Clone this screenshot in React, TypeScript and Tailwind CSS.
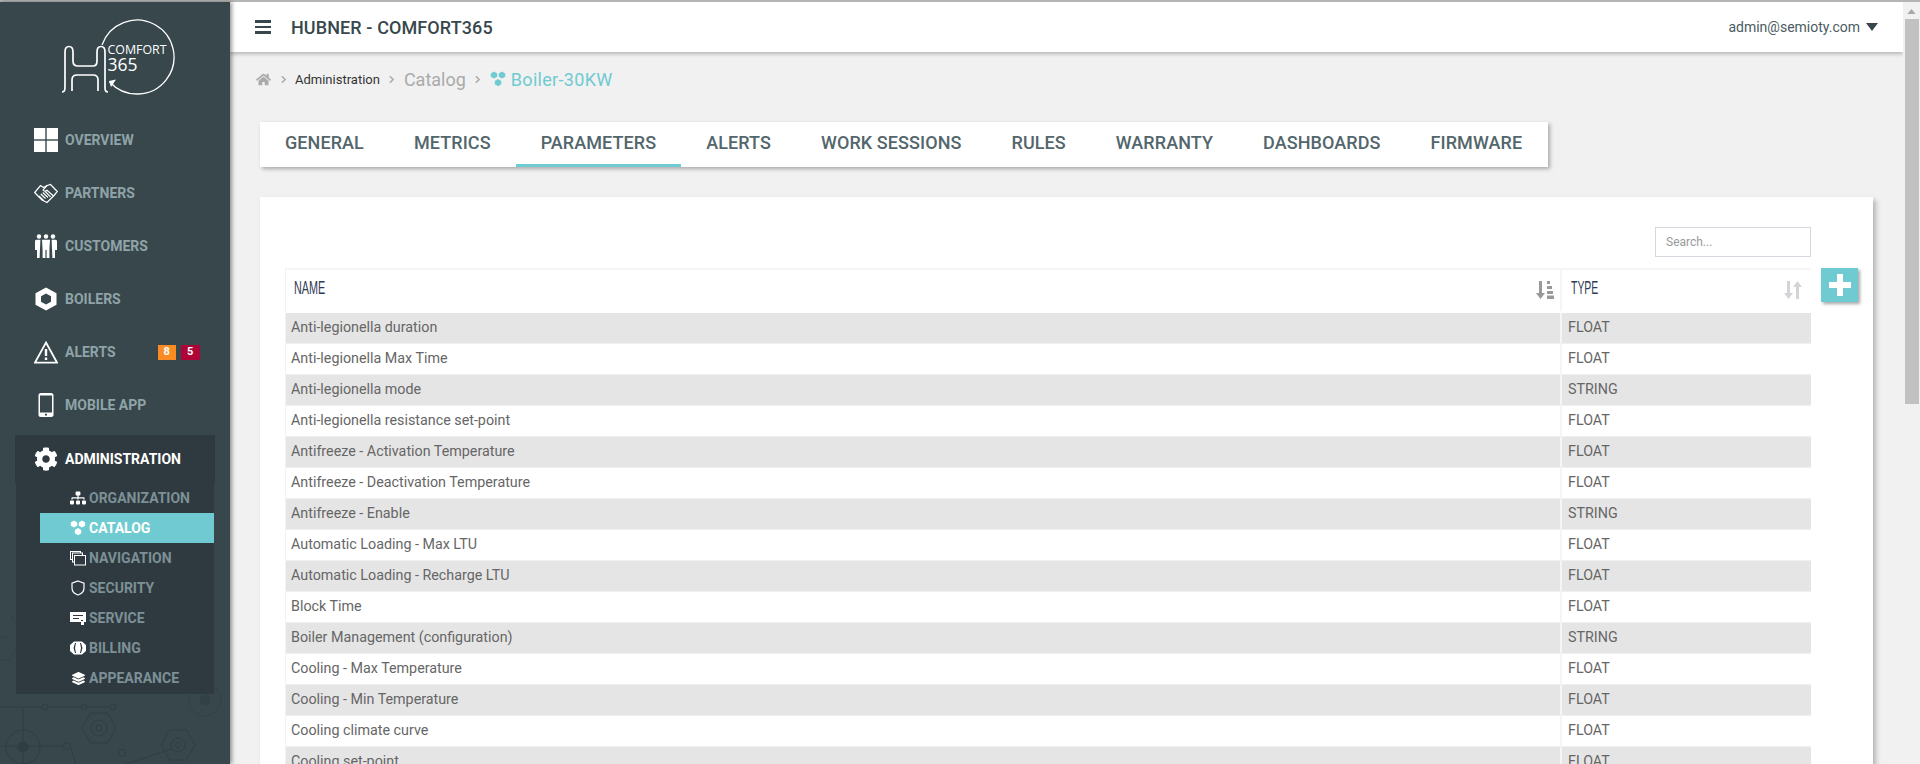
import { FaCog, FaHome, FaLayerGroup, FaSitemap } from 'react-icons/fa'

const ROBOTO = "font-['Roboto',sans-serif]"

const TABS = ['GENERAL', 'METRICS', 'PARAMETERS', 'ALERTS', 'WORK SESSIONS', 'RULES', 'WARRANTY', 'DASHBOARDS', 'FIRMWARE']

const ROWS = [
  ['Anti-legionella duration', 'FLOAT'],
  ['Anti-legionella Max Time', 'FLOAT'],
  ['Anti-legionella mode', 'STRING'],
  ['Anti-legionella resistance set-point', 'FLOAT'],
  ['Antifreeze - Activation Temperature', 'FLOAT'],
  ['Antifreeze - Deactivation Temperature', 'FLOAT'],
  ['Antifreeze - Enable', 'STRING'],
  ['Automatic Loading - Max LTU', 'FLOAT'],
  ['Automatic Loading - Recharge LTU', 'FLOAT'],
  ['Block Time', 'FLOAT'],
  ['Boiler Management (configuration)', 'STRING'],
  ['Cooling - Max Temperature', 'FLOAT'],
  ['Cooling - Min Temperature', 'FLOAT'],
  ['Cooling climate curve', 'FLOAT'],
  ['Cooling set-point', 'FLOAT'],
]

function Hexes({ className }: { className?: string }) {
  return (
    <svg viewBox="0 0 16 16" className={className} fill="currentColor">
      <path d="M4 0.5 7.2 2.4V5.8L4 7.6.8 5.8V2.4Z" />
      <path d="M12 0.5 15.2 2.4V5.8L12 7.6 8.8 5.8V2.4Z" />
      <path d="M8 8 11.2 9.9V13.3L8 15.2 4.8 13.3V9.9Z" />
    </svg>
  )
}

function Logo() {
  return (
    <svg viewBox="0 0 113 78" className="h-[78px] w-[113px] text-white" fill="none" stroke="currentColor">
      <path d="M40 27A37 37 0 1 1 47.7 64" strokeWidth="1.3" />
      <path d="M47 63 54 61.5 49 69Z" fill="currentColor" stroke="none" />
      <path d="M0 74C3 74 3 72 3 66V34C3 30 5 28.5 7 28.5S11 30 11 34V43C11 47 13 48 16 48H31C33 48 35 47 35 43V34C35 30 37 28.5 39 28.5S43 30 43 34V70C43 73 44 74 46 74" strokeWidth="1.7" />
      <path d="M10 73V62C10 59 12 57 15 57H31C34 57 36 59 36 62V73" strokeWidth="1.7" />
      <text x="45.5" y="36" fill="currentColor" stroke="none" fontSize="12.4" fontFamily="Open Sans, sans-serif">COMFORT</text>
      <text x="45.5" y="53" fill="currentColor" stroke="none" fontSize="17.5" fontFamily="Open Sans, sans-serif">365</text>
    </svg>
  )
}

const ICON = 'h-6 w-6 text-white'

const MAIN_NAV = [
  {
    label: 'OVERVIEW',
    icon: (
      <svg viewBox="0 0 24 24" className={ICON} fill="currentColor">
        <rect width="11.3" height="11.3" />
        <rect x="12.7" width="11.3" height="11.3" />
        <rect y="12.7" width="11.3" height="11.3" />
        <rect x="12.7" y="12.7" width="11.3" height="11.3" />
      </svg>
    ),
  },
  {
    label: 'PARTNERS',
    icon: (
      <svg viewBox="0 0 24 24" className={ICON} fill="none" stroke="currentColor" strokeWidth="1.2">
        <path d="M.7 11.5 6.5 4.5 9.5 6.5 13 4.5 16.5 3.5 23.3 10.5 20 14.5 13 21.5 11 20.5 8 19 4.5 15.5Z" />
        <path d="M13 4.5 9 9C10 10.5 11.5 10.5 13 9.3L19.5 15" />
        <path d="M6.8 13 11.5 17.5M8.8 11.5 14 16.5M5 15 9.5 19.5M11.2 10.5 16.5 15.8" />
      </svg>
    ),
  },
  {
    label: 'CUSTOMERS',
    icon: (
      <svg viewBox="0 0 24 24" className={ICON} fill="currentColor">
        <circle cx="5" cy="2.5" r="2.2" />
        <circle cx="12" cy="2.5" r="2.2" />
        <circle cx="19" cy="2.5" r="2.2" />
        <path d="M1 7.5C1 6 2 5.8 3 5.8H6.4L5.6 24H3V16H1Z" />
        <path d="M23 7.5C23 6 22 5.8 21 5.8H17.6L18.4 24H21V16H23Z" />
        <path d="M8 5.8H16L15.4 16V24H12.6V16H11.4V24H8.6V16Z" />
      </svg>
    ),
  },
  {
    label: 'BOILERS',
    icon: (
      <svg viewBox="0 0 24 24" className={ICON} fill="currentColor" fillRule="evenodd">
        <path d="M12 0.5 22.5 6.3V17.7L12 23.5 1.5 17.7V6.3ZM12 6.5 7 9.2V14.8L12 17.5 17 14.8V9.2Z" />
      </svg>
    ),
  },
  {
    label: 'ALERTS',
    icon: (
      <svg viewBox="0 0 24 24" className={ICON} fill="none" stroke="currentColor">
        <path d="M12 2.5 23 22.6H1Z" strokeWidth="1.8" />
        <path d="M12 9V16" strokeWidth="2.4" />
        <path d="M12 17.5V20" strokeWidth="2.4" />
      </svg>
    ),
    badges: true,
  },
  {
    label: 'MOBILE APP',
    icon: (
      <svg viewBox="0 0 24 24" className={ICON} fill="currentColor" fillRule="evenodd">
        <path d="M7 0H17C18.6 0 19.5 1 19.5 2V22C19.5 23 18.6 24 17 24H7C5.4 24 4.5 23 4.5 22V2C4.5 1 5.4 0 7 0ZM6 2.5V19.5H18V2.5ZM11 20.8V22.6H13V20.8Z" />
      </svg>
    ),
  },
]

const SUB_NAV = [
  { label: 'ORGANIZATION', icon: <FaSitemap className="h-4 w-4" /> },
  { label: 'CATALOG', icon: <Hexes className="h-4 w-4" />, active: true },
  {
    label: 'NAVIGATION',
    icon: (
      <svg viewBox="0 0 16 16" className="h-4 w-4" fill="#2f3a40" stroke="currentColor" strokeWidth="1">
        <rect x=".5" y="1.5" width="10" height="8" />
        <rect x="2.5" y="3" width="10" height="9" />
        <rect x="4.5" y="5.5" width="11" height="9.5" />
      </svg>
    ),
  },
  {
    label: 'SECURITY',
    icon: (
      <svg viewBox="0 0 16 16" className="h-4 w-4" fill="none" stroke="currentColor" strokeWidth="1.2">
        <path d="M8 1 14 3.2V8C14 11.5 11 14 8 15 5 14 2 11.5 2 8V3.2Z" />
      </svg>
    ),
  },
  {
    label: 'SERVICE',
    icon: (
      <svg viewBox="0 0 16 16" className="h-4 w-4" fill="currentColor" fillRule="evenodd">
        <path d="M0 2H16V12H13V10H11V12H0ZM3 5V6H13V5ZM3 8V9H9V8Z" />
        <rect x="11" y="11" width="3" height="4" />
      </svg>
    ),
  },
  {
    label: 'BILLING',
    icon: (
      <svg viewBox="0 0 16 16" className="h-4 w-4" fill="currentColor" fillRule="evenodd">
        <path d="M4 1.5H12L16 5V11L12 14.5H4L0 11V5ZM5 3 3.5 8 5 13H6L5 8 6 3ZM10 3 11 8 10 13H11L12.5 8 11 3Z" />
      </svg>
    ),
  },
  { label: 'APPEARANCE', icon: <FaLayerGroup className="h-[13px] w-[13px]" /> },
]

function CircuitPattern() {
  return (
    <svg viewBox="0 0 230 190" className="absolute bottom-0 left-0 h-[190px] w-[230px]" fill="none" stroke="#2f3e42" strokeWidth="1">
      <path d="M0 63H8M10 40 22 63 10 86H-6" opacity=".5" />
      <path d="M0 133H42M48 133H82M87 133H110" />
      <circle cx="45" cy="133" r="3" />
      <circle cx="84.5" cy="133" r="2.5" />
      <circle cx="113" cy="133" r="3" />
      <path d="M23 133V190M0 172H64M70 172 76 190" />
      <circle cx="23" cy="173" r="17" />
      <circle cx="23" cy="173" r="5" fill="#2f3e42" />
      <circle cx="67" cy="172" r="3.5" />
      <path d="M82 154 90.5 139H107.5L116 154 107.5 169H90.5Z" />
      <circle cx="99" cy="154" r="8" />
      <circle cx="99" cy="154" r="3" />
      <circle cx="205" cy="126" r="16" opacity=".6" />
      <circle cx="205" cy="126" r="5" fill="#2f3e42" opacity=".6" />
      <path d="M161 171 169.5 156H186.5L195 171 186.5 186H169.5Z" />
      <circle cx="178" cy="171" r="7" />
      <circle cx="178" cy="171" r="2.5" />
      <path d="M172 175 126 190" />
      <circle cx="122" cy="179" r="3.5" />
    </svg>
  )
}

function Chevron() {
  return (
    <svg viewBox="0 0 6 10" className="mx-[9.5px] h-[9px] w-[5px]" fill="none" stroke="#aaa" strokeWidth="1.8">
      <path d="M1 1 5 5 1 9" />
    </svg>
  )
}

function Sidebar() {
  return (
    <aside className={`relative z-20 flex h-full w-[230px] shrink-0 flex-col overflow-hidden bg-[#37474b] shadow-[2px_0_4px_rgba(0,0,0,0.4)] ${ROBOTO}`}>
      <CircuitPattern />
      <div className="relative flex h-[111px] shrink-0 pl-[62px] pt-[16px]">
        <Logo />
      </div>
      <nav className="relative flex flex-col">
        {MAIN_NAV.map((item) => (
          <div key={item.label} className="flex h-[53px] items-center pl-[34px]">
            {item.icon}
            <span className="ml-[7px] text-sm font-bold text-[#8fa3a8]">{item.label}</span>
            {item.badges && (
              <div className="ml-[42px] mt-[2px] flex gap-[5px] text-[11px] font-bold text-white">
                <span className="flex h-[15px] w-[18px] items-center justify-center bg-[#fb8c23]">8</span>
                <span className="flex h-[15px] w-[19px] items-center justify-center bg-[#ae0438]">5</span>
              </div>
            )}
          </div>
        ))}
        <div className="mx-[15px] mt-[4px] flex h-[48px] items-center bg-[#2f3a40] pl-[19px]">
          <FaCog className={ICON} />
          <span className="ml-[7px] text-sm font-bold text-white">ADMINISTRATION</span>
        </div>
        <div className="mx-[16px] flex h-[211px] flex-col bg-[#2f3a40]">
          {SUB_NAV.map((item) => (
            <div
              key={item.label}
              className={`ml-6 flex h-[30px] items-center pl-[30px] text-sm font-bold ${item.active ? 'bg-[#6fcbd1] text-white' : 'text-[#7c9096]'}`}
            >
              <span className="flex w-4 justify-center text-white">{item.icon}</span>
              <span className="ml-[3px]">{item.label}</span>
            </div>
          ))}
        </div>
      </nav>
    </aside>
  )
}

function Topbar() {
  return (
    <header className={`relative z-10 flex h-[50px] shrink-0 items-center bg-white pl-[25px] pr-[25px] shadow-[0_2px_4px_rgba(0,0,0,0.25)] ${ROBOTO}`}>
      <div className="flex w-[16px] flex-col gap-[3px]">
        <span className="h-[2.5px] bg-[#37474b]" />
        <span className="h-[2.5px] bg-[#37474b]" />
        <span className="h-[2.5px] bg-[#37474b]" />
      </div>
      <h1 className="ml-[20px] text-[18px] font-medium tracking-[0.1px] text-[#37474b]">HUBNER - COMFORT365</h1>
      <div className="ml-auto flex items-center gap-[6px] text-sm text-[#4b5b5f]">
        admin@semioty.com
        <svg viewBox="0 0 12 8" className="h-2 w-3" fill="#37474b">
          <path d="M0 0H12L6 8Z" />
        </svg>
      </div>
    </header>
  )
}

function Breadcrumb() {
  return (
    <div className={`flex h-[54px] shrink-0 items-center pl-[26px] text-[#aaa] ${ROBOTO}`}>
      <FaHome className="h-[15px] w-[15px]" />
      <Chevron />
      <span className="mt-[1px] text-[13px] text-[#333]">Administration</span>
      <Chevron />
      <span className="text-[18px]">Catalog</span>
      <Chevron />
      <Hexes className="h-4 w-4 text-[#6fcbd1]" />
      <span className="ml-[5px] text-[18px] tracking-[0.3px] text-[#6fcbd1]">Boiler-30KW</span>
    </div>
  )
}

function Tabs() {
  return (
    <div className={`ml-[30px] mt-[16px] flex h-[45px] w-fit shrink-0 bg-white pr-[1px] shadow-[2px_2px_4px_rgba(0,0,0,0.3)] ${ROBOTO}`}>
      {TABS.map((tab) => (
        <div
          key={tab}
          className={`flex items-center border-b-[3px] px-[25px] pb-[2px] text-[18px] font-medium tracking-[0.08px] ${tab === 'PARAMETERS' ? 'border-[#6fcbd1]' : 'border-transparent'} text-[#53666b]`}
        >
          {tab}
        </div>
      ))}
    </div>
  )
}

function SortIcon({ active }: { active?: boolean }) {
  return active ? (
    <svg viewBox="0 0 18 18" className="mb-[2px] h-[18px] w-[18px] text-[#999]" fill="currentColor">
      <path d="M3 0H6V12H9L4.5 18 0 12H3Z" />
      <rect x="11" y="0" width="3" height="3" />
      <rect x="11" y="5" width="5" height="3" />
      <rect x="11" y="10" width="6" height="3" />
      <rect x="11" y="14.5" width="7" height="3.5" />
    </svg>
  ) : (
    <svg viewBox="0 0 18 18" className="mb-[2px] h-[18px] w-[18px] text-[#d4d4d8]" fill="currentColor">
      <path d="M3 0H6V12H9L4.5 18 0 12H3Z" />
      <path d="M12 18H15V6H18L13.5 0 9 6H12Z" />
    </svg>
  )
}

function ParametersTable() {
  return (
    <div className={`border-l border-[#f2f2f2] ${ROBOTO}`}>
      <div className="flex h-[43px] border-t-2 border-[#f5f5f5]">
        <div className="flex flex-1 items-center justify-between border-r-2 border-[#f5f5f5] pl-[8px] pr-[6px]">
          <span className="mb-[4px] origin-left scale-x-[0.6] font-['Liberation_Sans_Narrow','Liberation_Sans',sans-serif] text-[18px] text-[#2f3a55]">NAME</span>
          <SortIcon active />
        </div>
        <div className="flex w-[249px] items-center justify-between pl-[9px] pr-[9px]">
          <span className="mb-[4px] origin-left scale-x-[0.58] font-['Liberation_Sans_Narrow','Liberation_Sans',sans-serif] text-[18px] text-[#2f3a55]">TYPE</span>
          <SortIcon />
        </div>
      </div>
      <div className="mt-[2px]">
        {ROWS.map(([name, type], index) => (
          <div
            key={name}
            className={`flex h-[31px] border-b border-[#f0f0f0] text-[14.3px] text-[#666] ${index % 2 === 0 ? 'bg-[#e5e5e5]' : 'bg-white'}`}
          >
            <div className="flex flex-1 items-center border-r-2 border-[#f5f5f5] pl-[5px]">{name}</div>
            <div className="flex w-[249px] items-center pl-[6px]">{type}</div>
          </div>
        ))}
      </div>
    </div>
  )
}

export default function App() {
  return (
    <div className="flex h-[764px] w-[1920px] flex-col overflow-hidden bg-[#f1f1f1]">
      <div className="h-[2px] shrink-0 bg-[#b5b5b5]" />
      <div className="flex min-h-0 flex-1">
        <Sidebar />
        <main className="flex min-w-0 flex-1 flex-col overflow-hidden">
          <Topbar />
          <Breadcrumb />
          <Tabs />
          <section className="relative ml-[30px] mr-[30px] mt-[30px] flex-1 shrink-0 bg-white pl-[25px] pr-[62px] pt-[30px] shadow-[3px_3px_5px_rgba(0,0,0,0.25)]">
            <div className="flex h-[41px] justify-end">
              <input
                placeholder="Search..."
                className={`h-[30px] w-[156px] border border-[#d5d8de] bg-white px-[10px] text-xs text-[#666] outline-none placeholder:text-[#999] ${ROBOTO}`}
              />
            </div>
            <ParametersTable />
            <button
              type="button"
              className="absolute right-[15px] top-[71px] flex h-[34px] w-[37px] items-center justify-center bg-[#6fcbd1] shadow-[2px_2px_3px_rgba(0,0,0,0.35)]"
            >
              <svg viewBox="0 0 22 22" className="h-[22px] w-[22px]" fill="#fff">
                <path d="M8 0H14V8H22V14H14V22H8V14H0V8H8Z" />
              </svg>
            </button>
          </section>
        </main>
        <div className="z-20 flex w-[17px] shrink-0 flex-col items-center bg-[#f1f1f1]">
          <svg viewBox="0 0 10 6" className="mt-[7px] h-[5px] w-[9px]" fill="#a8a8a8">
            <path d="M5 0 10 6H0Z" />
          </svg>
          <div className="mt-[5px] h-[385px] w-[14px] bg-[#c1c1c1]" />
        </div>
      </div>
    </div>
  )
}
